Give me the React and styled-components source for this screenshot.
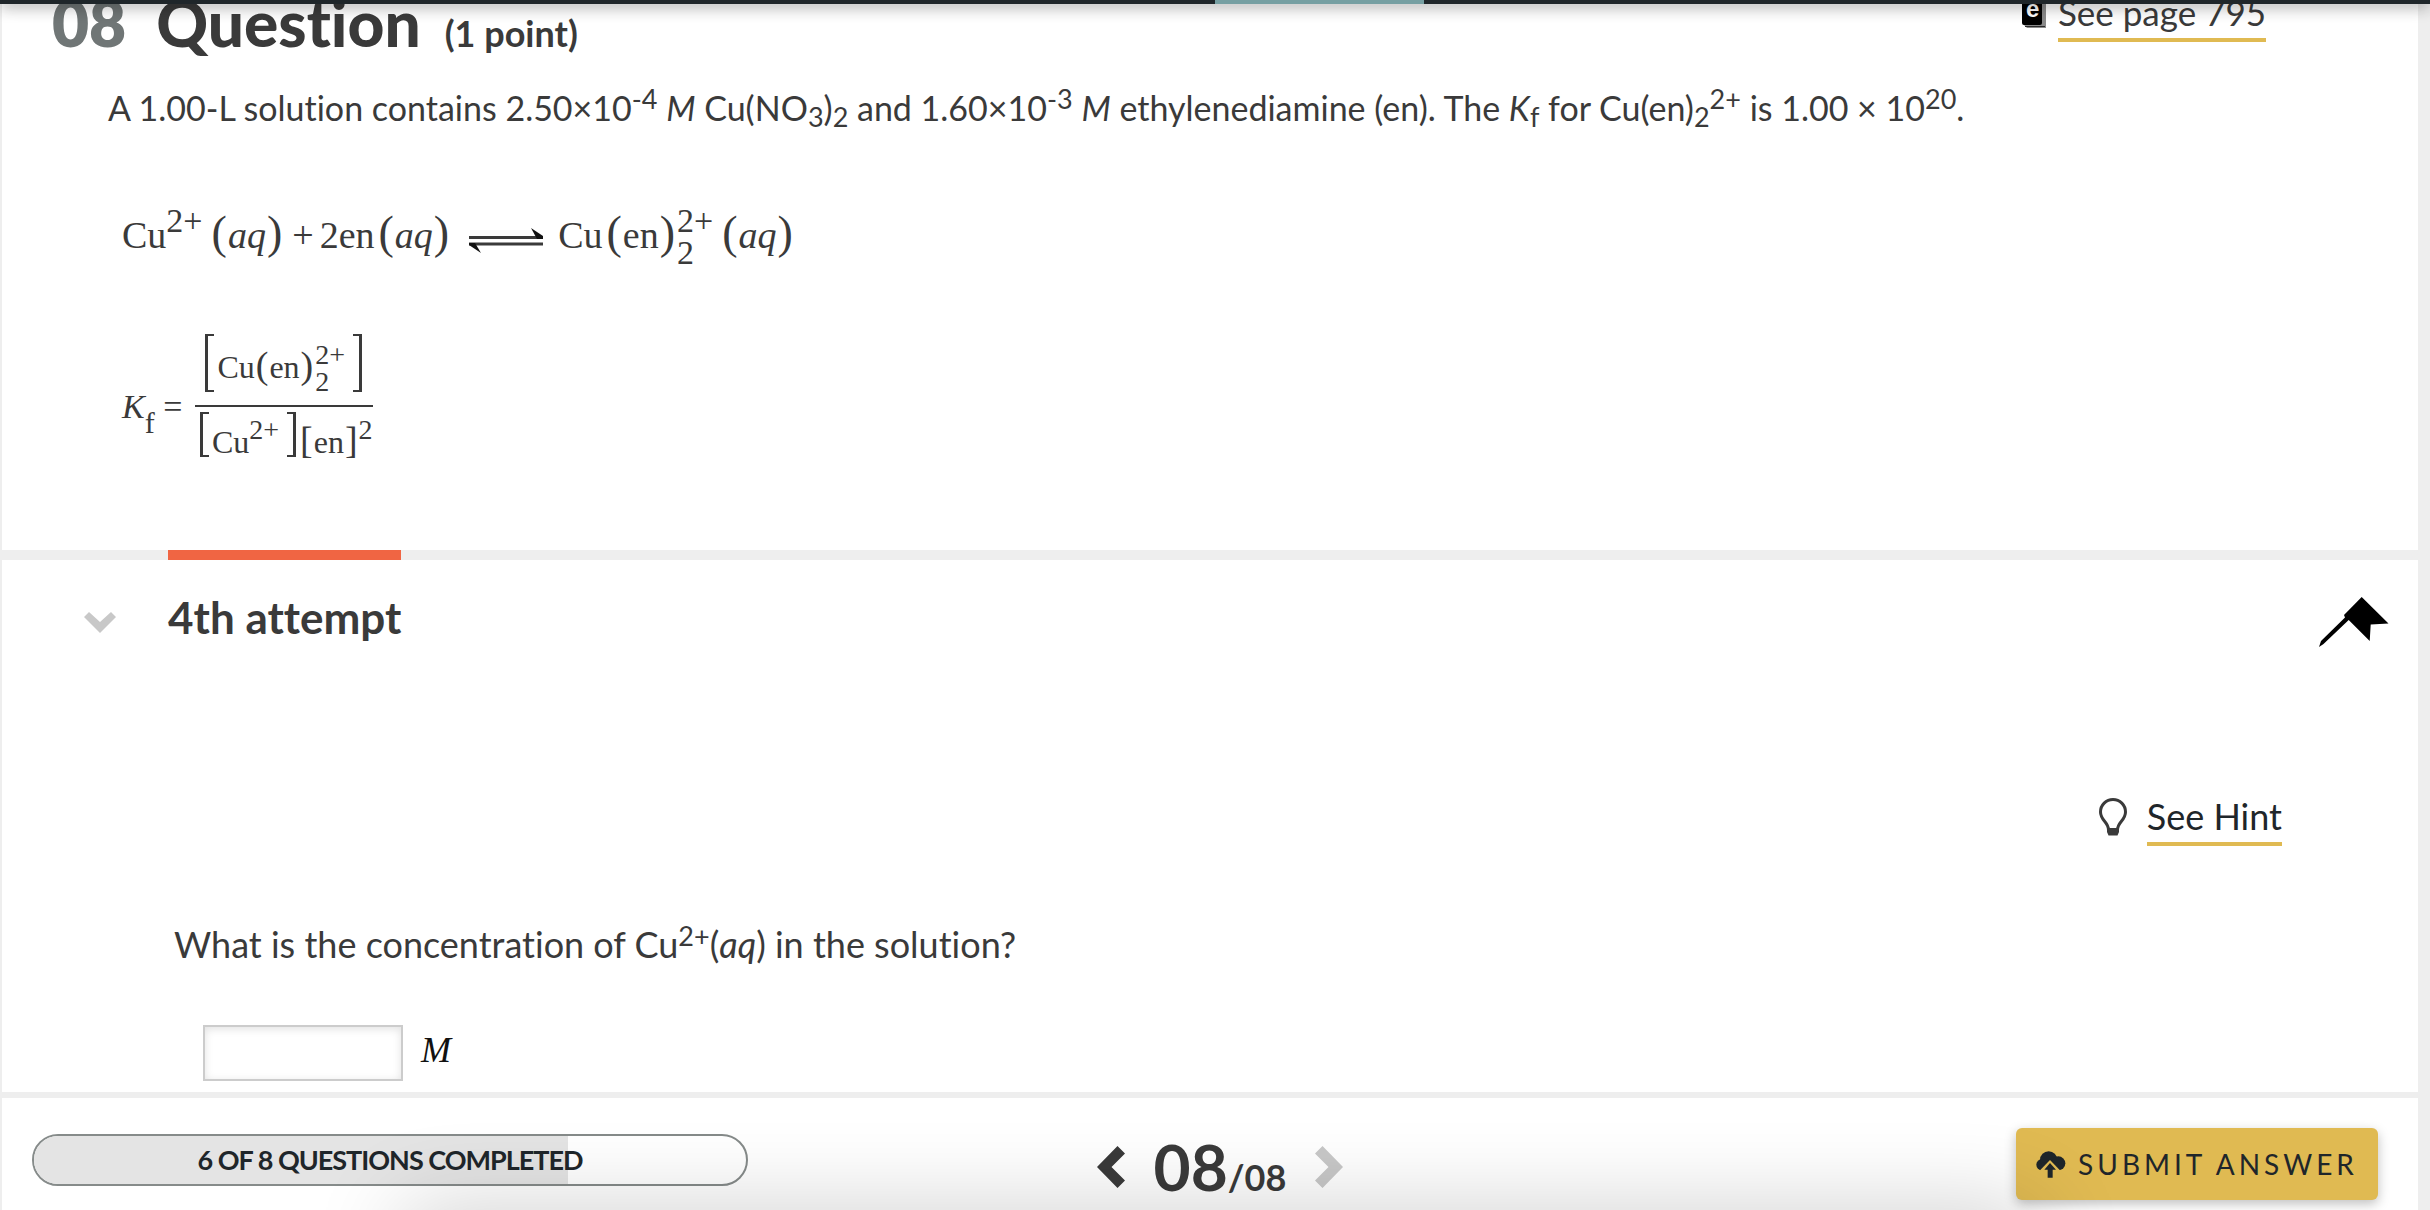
import React, { useState } from 'react';
import styled, { createGlobalStyle } from 'styled-components';

const GlobalStyle = createGlobalStyle`
  * {
    box-sizing: border-box;
  }

  body {
    margin: 0;
    background: #eeeeee;
    color: #3a3a3a;
    font-family: Lato, "Open Sans", sans-serif;
    font-size: 36px;
    line-height: 44px;
    font-variant-ligatures: none;
  }
`;

const TopBar = styled.div`
  position: fixed;
  top: 0;
  left: 0;
  right: 0;
  z-index: 2;
  height: 4px;
  padding-left: 50%;
  background: #1f262a;
  box-shadow: 0 0 16px rgba(0, 0, 0, 0.9);
`;

const ActiveTab = styled.div`
  width: 209px;
  height: 4px;
  background: #769fa2;
`;

const Page = styled.div`
  display: flex;
  flex-direction: column;
  min-height: 100vh;
  padding: 0 12px 0 2px;
`;

const QuestionSection = styled.section`
  margin-top: -10px;
  padding: 0 152px 92px 50px;
  background: #ffffff;
`;

const QuestionHeader = styled.header`
  display: flex;
  justify-content: space-between;
  align-items: flex-start;
`;

const Title = styled.h1`
  display: flex;
  align-items: baseline;
  margin: 0;
  font-size: 64px;
  line-height: 66px;
  font-weight: 900;
`;

const Number = styled.span`
  margin-right: 30px;
  color: #707676;
  font-weight: 800;
`;

const Points = styled.span`
  margin-left: 24px;
  font-size: 36px;
  line-height: 40px;
  font-weight: 700;
`;

const LinkRow = styled.div`
  display: flex;
  justify-content: flex-end;
  align-items: flex-start;
  gap: ${(props) => props.$gap};

  svg {
    margin-top: 4px;
  }
`;

const TextLink = styled.a`
  padding-bottom: 4px;
  border-bottom: 4px solid #e0ba52;
  color: ${(props) => props.$color || 'inherit'};
  font-size: ${(props) => props.$size || '36px'};
  text-decoration: none;
`;

const Sup = styled.sup`
  font-size: 27px;
  line-height: 0;
  vertical-align: 12px;
`;

const Sub = styled.sub`
  font-size: 27px;
  line-height: 0;
  vertical-align: -6px;
`;

const Prompt = styled.p`
  margin: 30px 0 0 56px;
  font-size: 34px;
`;

const Equation = styled.div`
  margin: 75px 0 0 70px;
  font-family: "Liberation Serif", serif;
  font-size: 38px;
  line-height: 48px;
  white-space: nowrap;
`;

const Fence = styled.span`
  margin: 0 1px;
  margin-left: ${(props) => (props.$open ? '4px' : '1px')};
  font-size: ${(props) => (props.$small ? '38px' : '46px')};
  line-height: 0;
`;

const Operator = styled.span`
  margin: 0 6px 0 9px;
`;

const MathSup = styled.span`
  margin-right: 5px;
  font-size: ${(props) => (props.$small ? '28px' : '34px')};
  line-height: 0;
  vertical-align: ${(props) => (props.$small ? '14px' : '16px')};

  &:last-child {
    margin-right: 0;
  }
`;

const Scripts = styled.span`
  display: inline-flex;
  flex-direction: column;
  margin: 0 5px 0 1px;
  font-size: ${(props) => (props.$small ? '28px' : '34px')};
  line-height: ${(props) => (props.$small ? '27px' : '32px')};
  vertical-align: ${(props) => (props.$small ? '14px' : '16px')};
`;

const Arrows = styled.svg`
  width: 74px;
  height: 26px;
  margin: 0 15px 0 19px;
  vertical-align: -6px;
`;

const Constant = styled.div`
  display: flex;
  align-items: center;
  margin: 65px 0 0 70px;
  font-family: "Liberation Serif", serif;
  font-size: 34px;
  line-height: 44px;
`;

const ConstantName = styled.div`
  padding-top: 22px;
`;

const MathSub = styled.span`
  font-size: 30px;
  line-height: 0;
  vertical-align: -15px;
`;

const Fraction = styled.div`
  display: flex;
  flex-direction: column;
  align-items: center;
  margin-left: 12px;
  font-size: 32px;
  line-height: 32px;
  white-space: nowrap;
`;

const Numerator = styled.div`
  padding: 0 8px 10px;
`;

const Denominator = styled.div`
  padding: 5px 0 0 2px;
  border-top: 2px solid #3a3a3a;
`;

const Bracket = styled.span`
  display: inline-block;
  width: 9px;
  height: ${(props) => (props.$tall ? '58px' : '45px')};
  margin: 0 3px;
  border: 2px solid #3a3a3a;
  border-left-width: ${(props) => (props.$right ? '0' : '3px')};
  border-right-width: ${(props) => (props.$right ? '3px' : '0')};
  vertical-align: ${(props) => (props.$tall ? '-14px' : '-4px')};
`;

const AttemptSection = styled.section`
  flex: 1;
  padding: 29px 0 10px;
  border-top: 10px solid #eeeeee;
  background: #ffffff;
`;

const AttemptHeader = styled.header`
  display: flex;
  align-items: center;
  padding: 0 29px 0 82px;
`;

const AttemptTitle = styled.h2`
  position: relative;
  margin: 0 auto 0 52px;
  padding-bottom: 10px;
  font-size: 44px;
  line-height: 56px;
  font-weight: 700;

  &::before {
    content: '';
    position: absolute;
    top: -39px;
    left: 0;
    right: 0;
    height: 10px;
    background: #f06543;
  }
`;

const IconButton = styled.button`
  display: flex;
  padding: 0;
  border: 0;
  background: none;
  color: ${(props) => props.$color || '#3a3a3a'};
  cursor: pointer;
`;

const HintRow = styled(LinkRow)`
  margin-top: 139px;
  padding-right: 136px;
`;

const AnswerLabel = styled.label`
  display: block;
  margin: 76px 0 0 172px;
`;

const AnswerRow = styled.div`
  display: flex;
  align-items: center;
  gap: 18px;
  margin: 59px 0 0 201px;
`;

const AnswerInput = styled.input`
  width: 200px;
  height: 56px;
  padding: 0 10px;
  border: 2px solid #cccccc;
  background: #ffffff;
  box-shadow: inset 0 2px 8px rgba(0, 0, 0, 0.12);
  font: inherit;
`;

const Unit = styled.span`
  padding-bottom: 6px;
  color: #111111;
  font-family: "Liberation Serif", serif;
  font-style: italic;
`;

const Footer = styled.footer`
  position: sticky;
  bottom: 0;
  display: grid;
  grid-template-columns: 1fr auto 1fr;
  align-items: start;
  height: 118px;
  padding: 30px 40px 0 30px;
  border-top: 6px solid #eeeeee;
  background: #ffffff;
  overflow: hidden;
`;

/* soft shade coming up from the bottom edge */
const FooterShade = styled.div`
  position: absolute;
  left: 400px;
  right: 380px;
  top: 100%;
  height: 80px;
  box-shadow: 0 0 90px rgba(0, 0, 0, 0.2);
  pointer-events: none;
`;

const Progress = styled.div`
  position: relative;
  width: 716px;
  max-width: 100%;
  height: 52px;
  margin-top: 6px;
  border: 2px solid #868b8a;
  border-radius: 26px;
  background: #ffffff;
  overflow: hidden;
`;

const ProgressFill = styled.div`
  height: 100%;
  background: #e4e4e4;
`;

const ProgressLabel = styled.span`
  position: absolute;
  inset: 0;
  color: #1f262a;
  font-size: 27px;
  line-height: 48px;
  font-weight: 700;
  letter-spacing: -1px;
  text-align: center;
  text-transform: uppercase;
`;

const Pager = styled.nav`
  display: flex;
  align-items: center;
  gap: 29px;
  padding-left: 30px;
`;

const PageCount = styled.span`
  font-size: 64px;
  line-height: 78px;
  font-weight: 700;
`;

const PageTotal = styled.span`
  font-size: 36px;
  line-height: 0;
`;

const SubmitButton = styled.button`
  display: flex;
  justify-content: center;
  align-items: center;
  justify-self: end;
  gap: 12px;
  width: 362px;
  height: 72px;
  padding: 0;
  border: 0;
  border-radius: 6px;
  background: #e0ba52;
  box-shadow: 0 4px 12px rgba(0, 0, 0, 0.25);
  color: #1f262a;
  font-family: inherit;
  font-size: 28px;
  letter-spacing: 4px;
  text-transform: uppercase;
  cursor: pointer;
`;

const BookIcon = () => (
  <svg width="24" height="34" viewBox="0 0 24 34" aria-hidden="true">
    <path d="M4 2H24V34H5L1 30Z" fill="#8a8a8a" />
    <path d="M3 32.500H23" stroke="#2a2a2a" strokeWidth="1" />
    <rect x="0" y="0" width="20" height="31" rx="2" fill="#000000" />
    <text x="4" y="23" fill="#ffffff" fontFamily="Liberation Sans" fontSize="24" fontWeight="700">e</text>
  </svg>
);

const BulbIcon = () => (
  <svg width="28" height="38" viewBox="0 0 28 38" fill="none" aria-hidden="true">
    <path
      d="M9.500 32C9.500 24 1.500 22.500 1.500 14A12.500 12.500 0 0 1 26.500 14C26.500 22.500 18.500 24 18.500 32"
      stroke="#3a3a3a"
      strokeWidth="3"
    />
    <path d="M8 30H20V34L18.500 37.500H9.500L8 34Z" fill="#3a3a3a" />
  </svg>
);

const PinIcon = () => (
  <svg width="70" height="51" viewBox="0 0 70 51" aria-hidden="true">
    <path
      d="M42.700 0L69.500 26.500L51.700 27.500L50.700 44L29.700 23L4.500 47L0 50L2 44L26 20.500L25 18Z"
      fill="#000000"
    />
  </svg>
);

const CloudIcon = () => (
  <svg width="30" height="27" viewBox="0 0 90 81" aria-hidden="true">
    <g fill="#1f262a">
      <circle cx="18" cy="41" r="17" />
      <circle cx="38" cy="27" r="26" />
      <circle cx="67" cy="37" r="21" />
      <path d="M18 35H67V58H18Z" />
    </g>
    <path d="M42 27L74 60H10Z" fill="#e0ba52" />
    <path d="M42 36L60 56H50V80H35V56H25Z" fill="#1f262a" />
  </svg>
);

const EquilibriumArrows = () => (
  <Arrows viewBox="0 0 74 26" role="img" aria-label="is in equilibrium with">
    <path d="M0 9.500H74M0 16H74" stroke="#3a3a3a" strokeWidth="3" />
    <path d="M62 0L74 8V11H68Z" fill="#111111" />
    <path d="M12 25L0 17V15H6Z" fill="#111111" />
  </Arrows>
);

const App = () => {
  const [answer, setAnswer] = useState('');
  const completed = 6;
  const total = 8;

  return (
    <>
      <GlobalStyle />
      <TopBar>
        <ActiveTab />
      </TopBar>
      <Page>
        <QuestionSection>
          <QuestionHeader>
            <Title>
              <Number>08</Number>
              Question
              <Points>(1 point)</Points>
            </Title>
            <LinkRow $gap="12px">
              <BookIcon />
              <TextLink href="#page-795" $size="35px">See page 795</TextLink>
            </LinkRow>
          </QuestionHeader>

          <Prompt>
            A 1.00-L solution contains 2.50×10<Sup>-4</Sup> <i>M</i> Cu(NO<Sub>3</Sub>)<Sub>2</Sub> and
            1.60×10<Sup>-3</Sup> <i>M</i> ethylenediamine (en). The <i>K</i><Sub>f</Sub> for
            Cu(en)<Sub>2</Sub><Sup>2+</Sup> is 1.00 × 10<Sup>20</Sup>.
          </Prompt>

          <Equation>
            Cu<MathSup>2+</MathSup>
            <Fence $open>(</Fence><i>aq</i><Fence>)</Fence>
            <Operator>+</Operator>
            2en
            <Fence $open>(</Fence><i>aq</i><Fence>)</Fence>
            <EquilibriumArrows />
            Cu<Fence $open>(</Fence>en<Fence>)</Fence>
            <Scripts>
              <span>2+</span>
              <span>2</span>
            </Scripts>
            <Fence $open>(</Fence><i>aq</i><Fence>)</Fence>
          </Equation>

          <Constant>
            <ConstantName>
              <i>K</i><MathSub>f</MathSub> =
            </ConstantName>
            <Fraction>
              <Numerator>
                <Bracket $tall />
                Cu<Fence $small>(</Fence>en<Fence $small>)</Fence>
                <Scripts $small>
                  <span>2+</span>
                  <span>2</span>
                </Scripts>
                <Bracket $tall $right />
              </Numerator>
              <Denominator>
                <Bracket />
                Cu<MathSup $small>2+</MathSup>
                <Bracket $right />
                <Fence $small>[</Fence>en<Fence $small>]</Fence>
                <MathSup $small>2</MathSup>
              </Denominator>
            </Fraction>
          </Constant>
        </QuestionSection>

        <AttemptSection>
          <AttemptHeader>
            <IconButton type="button" aria-label="Collapse attempt" $color="#c8c8c8">
              <svg width="32" height="21" viewBox="0 0 32 21" aria-hidden="true">
                <path d="M5 0L16 10L27 0L32 5L16 21L0 5Z" fill="currentColor" />
              </svg>
            </IconButton>
            <AttemptTitle>4th attempt</AttemptTitle>
            <IconButton type="button" aria-label="Pin">
              <PinIcon />
            </IconButton>
          </AttemptHeader>

          <HintRow $gap="20px">
            <BulbIcon />
            <TextLink href="#hint" $color="#1f262a">See Hint</TextLink>
          </HintRow>

          <AnswerLabel htmlFor="answer">
            What is the concentration of Cu<Sup>2+</Sup>(<i>aq</i>) in the solution?
          </AnswerLabel>
          <AnswerRow>
            <AnswerInput
              id="answer"
              type="text"
              value={answer}
              onChange={(event) => setAnswer(event.target.value)}
            />
            <Unit>M</Unit>
          </AnswerRow>
        </AttemptSection>

        <Footer>
          <Progress>
            <ProgressFill style={{ width: `${(completed / total) * 100}%` }} />
            <ProgressLabel>{completed} of {total} questions completed</ProgressLabel>
          </Progress>
          <Pager aria-label="Questions">
            <IconButton type="button" aria-label="Previous question">
              <svg width="28" height="42" viewBox="0 0 28 42" aria-hidden="true">
                <path d="M20.500 0L28 7.500L14.500 21L28 34.500L20.500 42L0 21Z" fill="currentColor" />
              </svg>
            </IconButton>
            <PageCount>
              08<PageTotal>/08</PageTotal>
            </PageCount>
            <IconButton type="button" aria-label="Next question" $color="#c8c8c8">
              <svg width="28" height="42" viewBox="0 0 28 42" aria-hidden="true">
                <path d="M7.500 0L0 7.500L13.500 21L0 34.500L7.500 42L28 21Z" fill="currentColor" />
              </svg>
            </IconButton>
          </Pager>
          <SubmitButton type="submit">
            <CloudIcon />
            Submit Answer
          </SubmitButton>
          <FooterShade />
        </Footer>
      </Page>
    </>
  );
};

export default App;
